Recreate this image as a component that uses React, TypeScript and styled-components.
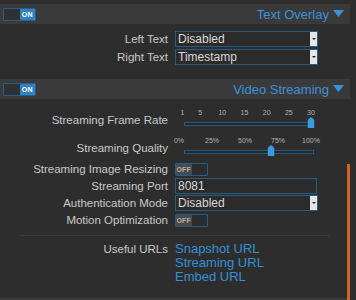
import React from 'react'
import styled, { createGlobalStyle } from 'styled-components'

const GlobalStyle = createGlobalStyle`
  html, body {
    margin: 0;
    padding: 0;
    background: #2d2d2d;
    overflow: hidden;
  }
  body {
    font-family: 'Liberation Sans', Arial, sans-serif;
    color: #cacaca;
  }
`

const Page = styled.div`
  position: relative;
  width: 350px;
  height: 300px;
  padding-top: 4px;
  overflow: hidden;
`

const Header = styled.div<{ $mt?: number }>`
  height: 20px;
  margin-top: ${p => p.$mt || 0}px;
  background: #3a3a3a;
  display: flex;
  align-items: center;
  justify-content: space-between;
  padding: 0 6px 0 3px;
`

const Title = styled.div`
  color: #3a92d8;
  font-size: 13px;
  display: flex;
  align-items: center;
  gap: 4px;
`

const Switch = styled.div`
  width: 31px;
  height: 11px;
  border: 1px solid #235f8e;
  border-radius: 1px;
  display: flex;
  background: #303030;
`

const SwitchPart = styled.div<{ $fill: string; $color: string }>`
  flex: 1;
  background: ${p => p.$fill};
  color: ${p => p.$color};
  font-size: 7px;
  font-weight: bold;
  display: flex;
  align-items: center;
  justify-content: center;
  letter-spacing: 0.2px;
`

const Body = styled.div<{ $top: number; $bottom: number }>`
  padding: ${p => p.$top}px 0 ${p => p.$bottom}px;
  display: flex;
  flex-direction: column;
  gap: 2px;
`

const Row = styled.div<{ $h: number; $align?: string; $mt?: number }>`
  display: grid;
  grid-template-columns: 168px 143px;
  column-gap: 7px;
  height: ${p => p.$h}px;
  margin-top: ${p => p.$mt || 0}px;
  align-items: ${p => p.$align || 'center'};
`

const Label = styled.div<{ $lh?: number; $pb?: number }>`
  text-align: right;
  font-size: 11.5px;
  line-height: ${p => p.$lh || 16}px;
  padding-bottom: ${p => p.$pb || 0}px;
  white-space: nowrap;
`

const Field = styled.div<{ $w?: number }>`
  box-sizing: border-box;
  width: ${p => p.$w || 143}px;
  height: 16px;
  border: 1px solid #285b82;
  background: #2b2b2b;
  display: flex;
  align-items: center;
  font-size: 12px;
  color: #d8d8d8;
  padding-left: 2px;
`

const FieldText = styled.span`
  flex: 1;
`

const Arrow = styled.div`
  width: 7px;
  align-self: stretch;
  background: #e6e6e6;
  display: flex;
  align-items: center;
  justify-content: center;
  &::after {
    content: '';
    border-left: 2px solid transparent;
    border-right: 2px solid transparent;
    border-top: 2px solid #222;
  }
`

const Slider = styled.div`
  position: relative;
  height: 26px;
`

const Ticks = styled.div`
  position: relative;
  height: 9px;
  margin-top: 5px;
`

const Tick = styled.span`
  position: absolute;
  top: 0;
  transform: translateX(-50%);
  font-size: 7px;
  line-height: 9px;
  color: #b4b4b4;
`

const Track = styled.div`
  box-sizing: border-box;
  height: 4px;
  margin: 5px 4px 0 9px;
  border: 1px solid #285b82;
  background: #262626;
`

const Thumb = styled.svg`
  position: absolute;
  top: 14px;
  transform: translateX(-50%);
`

const Separator = styled.div`
  height: 1px;
  background: #3a3a3a;
  margin: 8px 20px 6px;
`

const Links = styled.div`
  display: flex;
  flex-direction: column;
`

const Link = styled.a`
  color: #3590d6;
  font-size: 13px;
  line-height: 14px;
  text-decoration: none;
`

const Scrollbar = styled.div`
  position: absolute;
  right: 0;
  top: 164px;
  width: 3px;
  height: 136px;
  background: #d4602b;
`

const Caret = () => (
  <svg width="11" height="8" viewBox="0 0 11 8">
    <polygon points="0,0 11,0 5.5,7" fill="#3a92d8" />
  </svg>
)

const Toggle = ({ on }: { on: boolean }) =>
  on ? (
    <Switch>
      <SwitchPart $fill="#303030" $color="#fff" />
      <SwitchPart $fill="#3180c2" $color="#fff">ON</SwitchPart>
    </Switch>
  ) : (
    <Switch>
      <SwitchPart $fill="#4a4a4a" $color="#b0b0b0">OFF</SwitchPart>
      <SwitchPart $fill="#2c2c2c" $color="#fff" />
    </Switch>
  )

const Select = ({ value }: { value: string }) => (
  <Field>
    <FieldText>{value}</FieldText>
    <Arrow />
  </Field>
)

type SliderProps = {
  ticks: { v: number; t: string }[]
  max: number
  a: number
  b: number
  value: number
}

const RangeSlider = ({ ticks, max, a, b, value }: SliderProps) => {
  const pos = (v: number) => a + (v / max) * (b - a)
  return (
    <Slider>
      <Ticks>
        {ticks.map(k => (
          <Tick key={k.t} style={{ left: pos(k.v) }}>{k.t}</Tick>
        ))}
      </Ticks>
      <Track />
      <Thumb width="7" height="11" viewBox="0 0 7 11" style={{ left: pos(value) }}>
        <path d="M3.5 0 L6.5 2.5 Q7 3 7 4 L7 11 L0 11 L0 4 Q0 3 0.5 2.5 Z" fill="#3a9ae2" />
      </Thumb>
    </Slider>
  )
}

const SectionHeader = ({ title }: { title: string }) => (
  <Header>
    <Toggle on />
    <Title>
      {title}
      <Caret />
    </Title>
  </Header>
)

export default function App() {
  return (
    <Page>
      <GlobalStyle />
      <SectionHeader title="Text Overlay" />
      <Body $top={7} $bottom={14}>
        <Row $h={16}>
          <Label>Left Text</Label>
          <Select value="Disabled" />
        </Row>
        <Row $h={16}>
          <Label>Right Text</Label>
          <Select value="Timestamp" />
        </Row>
      </Body>

      <SectionHeader title="Video Streaming" />
      <Body $top={4} $bottom={0}>
        <Row $h={26} $align="end">
          <Label $pb={1}>Streaming Frame Rate</Label>
          <RangeSlider
            ticks={[1, 5, 10, 15, 20, 25, 30].map(v => ({ v, t: String(v) }))}
            max={30}
            a={3}
            b={136}
            value={30}
          />
        </Row>
        <Row $h={26} $align="end">
          <Label $pb={1}>Streaming Quality</Label>
          <RangeSlider
            ticks={[0, 25, 50, 75, 100].map(v => ({ v, t: v + '%' }))}
            max={100}
            a={4}
            b={136}
            value={70}
          />
        </Row>
        <Row $h={15} $mt={2}>
          <Label>Streaming Image Resizing</Label>
          <Toggle on={false} />
        </Row>
        <Row $h={15}>
          <Label>Streaming Port</Label>
          <Field $w={142}>
            <FieldText>8081</FieldText>
          </Field>
        </Row>
        <Row $h={15}>
          <Label>Authentication Mode</Label>
          <Select value="Disabled" />
        </Row>
        <Row $h={15}>
          <Label>Motion Optimization</Label>
          <Toggle on={false} />
        </Row>
      </Body>
      <Separator />
      <Row $h={42} $align="start">
        <Label $lh={14}>Useful URLs</Label>
        <Links>
          <Link href="#">Snapshot URL</Link>
          <Link href="#">Streaming URL</Link>
          <Link href="#">Embed URL</Link>
        </Links>
      </Row>
      <Header $mt={14} />
      <Scrollbar />
    </Page>
  )
}
